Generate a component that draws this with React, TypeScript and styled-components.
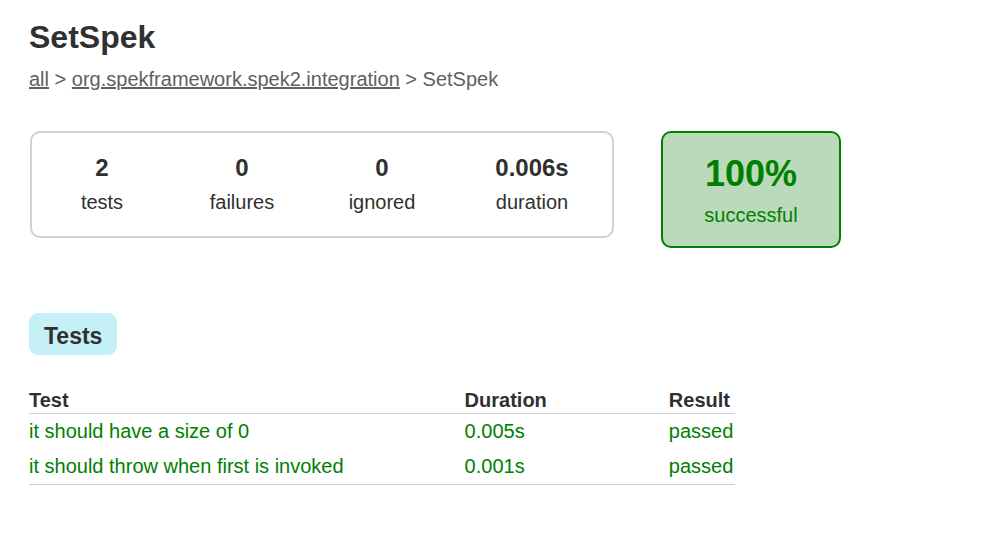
import React from "react";
import styled, { createGlobalStyle } from "styled-components";

const GlobalStyle = createGlobalStyle`
  html, body {
    margin: 0;
    padding: 0;
    background: #ffffff;
  }
  body {
    font-family: "Liberation Sans", Arial, sans-serif;
    font-size: 20px;
    color: #303030;
  }
`;

const Content = styled.div`
  padding: 19px 29px 30px 29px;
`;

const Title = styled.h1`
  font-size: 32px;
  font-weight: bold;
  margin: 0 0 12px 0;
  line-height: normal;
  white-space: nowrap;
`;

const Breadcrumbs = styled.div`
  color: #606060;
  line-height: normal;
`;

const CrumbLink = styled.a`
  color: #606060;
  text-decoration: underline;
`;

const Summary = styled.div`
  display: flex;
  align-items: flex-start;
  margin-top: 40px;
`;

const SummaryGroup = styled.div`
  display: flex;
  border: solid 2px #d0d0d0;
  border-radius: 10px;
  margin-left: 1px;
`;

const InfoBox = styled.div<{ $w: number }>`
  width: ${(p) => p.$w}px;
  padding: 21px 0 22px 0;
  text-align: center;
`;

const Counter = styled.div`
  font-size: 24px;
  font-weight: bold;
  margin-bottom: 9px;
  line-height: normal;
`;

const Label = styled.div`
  line-height: normal;
`;

const SuccessRate = styled.div`
  width: 176px;
  margin-left: 47px;
  padding: 20px 0 19px 0;
  border: solid 2px #008000;
  border-radius: 10px;
  background-color: #bbd9bb;
  color: #008000;
  text-align: center;
`;

const Percent = styled.div`
  font-size: 36px;
  font-weight: bold;
  margin-bottom: 9px;
  line-height: normal;
`;

const TabLinks = styled.div`
  display: flex;
  margin-top: 65px;
`;

const Tab = styled.div`
  padding: 9px 14px 5px 14px;
  border: solid 1px #c5f0f5;
  border-radius: 9px;
  background-color: #c5f0f5;
  font-size: 23px;
  font-weight: bold;
  line-height: 26px;
  color: #303030;
`;

const Table = styled.table`
  margin-top: 33px;
  border-collapse: collapse;
  border-bottom: solid #d0d0d0 1px;
  min-width: 350px;
`;

const Th = styled.th`
  text-align: left;
  white-space: nowrap;
  padding: 1px 2px 1px 120px;
  border-bottom: solid #d0d0d0 1px;
  font-weight: bold;
  line-height: normal;
  &:first-child {
    padding-left: 0;
    padding-right: 1px;
  }
`;

const Td = styled.td`
  white-space: nowrap;
  padding: 6px 2px 6px 120px;
  color: #008000;
  line-height: normal;
  &:first-child {
    padding-left: 0;
    padding-right: 1px;
  }
`;

const tests = [
  { name: "it should have a size of 0", duration: "0.005s", result: "passed" },
  { name: "it should throw when first is invoked", duration: "0.001s", result: "passed" },
];

const boxes = [
  { value: "2", label: "tests", w: 140 },
  { value: "0", label: "failures", w: 140 },
  { value: "0", label: "ignored", w: 140 },
  { value: "0.006s", label: "duration", w: 160 },
];

export default function App() {
  return (
    <>
      <GlobalStyle />
      <Content>
        <Title>SetSpek</Title>
        <Breadcrumbs>
          <CrumbLink href="#">all</CrumbLink> &gt;{" "}
          <CrumbLink href="#">org.spekframework.spek2.integration</CrumbLink> &gt; SetSpek
        </Breadcrumbs>
        <Summary>
          <SummaryGroup>
            {boxes.map((b) => (
              <InfoBox key={b.label} $w={b.w}>
                <Counter>{b.value}</Counter>
                <Label>{b.label}</Label>
              </InfoBox>
            ))}
          </SummaryGroup>
          <SuccessRate>
            <Percent>100%</Percent>
            <Label>successful</Label>
          </SuccessRate>
        </Summary>
        <TabLinks>
          <Tab>Tests</Tab>
        </TabLinks>
        <Table>
          <thead>
            <tr>
              <Th>Test</Th>
              <Th>Duration</Th>
              <Th>Result</Th>
            </tr>
          </thead>
          <tbody>
            {tests.map((t) => (
              <tr key={t.name}>
                <Td>{t.name}</Td>
                <Td>{t.duration}</Td>
                <Td>{t.result}</Td>
              </tr>
            ))}
          </tbody>
        </Table>
      </Content>
    </>
  );
}
